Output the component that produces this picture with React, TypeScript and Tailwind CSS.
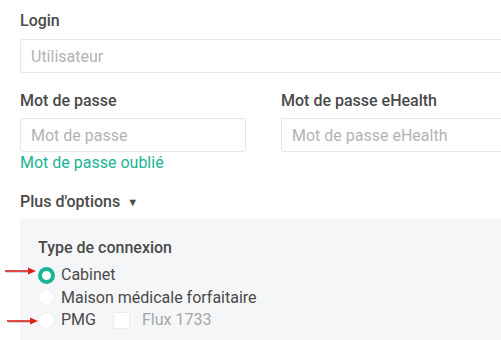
import React from "react";

function Radio({ checked }: { checked?: boolean }) {
  return checked ? (
    <span className="w-[17px] h-[17px] rounded-full border-[4px] border-[#1ab394] bg-white shrink-0" />
  ) : (
    <span className="w-[17px] h-[17px] rounded-full border border-[#ececec] bg-white shrink-0" />
  );
}

function Arrow({ className }: { className: string }) {
  return (
    <svg className={className} width="34" height="10" viewBox="0 0 34 10">
      <line x1="1" y1="5" x2="26" y2="5" stroke="#888" strokeOpacity="0.35" strokeWidth="2" transform="translate(1,1)" />
      <line x1="1" y1="5" x2="26" y2="5" stroke="#e0201c" strokeWidth="1.6" />
      <polygon points="24,1.5 32,5 24,8.5" fill="#e0201c" />
    </svg>
  );
}

export default function App() {
  return (
    <div className="w-[501px] h-[340px] overflow-hidden bg-white relative font-['Roboto',sans-serif] text-[16px]">
      <div className="ml-[20px] w-[487px] pt-[11px]">
        <div className="font-medium text-[#4a4a4a] leading-[20px]">Login</div>
        <input
          className="mt-[8px] w-full h-[34px] border border-[#e6e6e6] rounded-[3px] px-[10px] outline-none placeholder:text-[#b3b3b3]"
          placeholder="Utilisateur"
        />
        <div className="grid grid-cols-2 gap-x-[35px] mt-[18px]">
          <div>
            <div className="font-medium text-[#4a4a4a] leading-[20px]">Mot de passe</div>
            <input
              className="mt-[7px] w-full h-[34px] border border-[#e6e6e6] rounded-[3px] px-[10px] outline-none placeholder:text-[#b3b3b3]"
              placeholder="Mot de passe"
            />
          </div>
          <div>
            <div className="font-medium text-[#4a4a4a] leading-[20px]">Mot de passe eHealth</div>
            <input
              className="mt-[7px] w-full h-[34px] border border-[#e6e6e6] rounded-[3px] px-[10px] outline-none placeholder:text-[#b3b3b3]"
              placeholder="Mot de passe eHealth"
            />
          </div>
        </div>
        <div className="text-[#1ab394] leading-[20px] mt-[1px]">Mot de passe oublié</div>
        <div className="mt-[19px] flex items-center gap-[7px] font-medium text-[#4a4a4a] leading-[20px]">
          <span>Plus d'options</span>
          <span className="text-[11px] leading-none">▼</span>
        </div>
        <div className="mt-[7px] bg-[#f5f6f7] h-[200px] pl-[18px] pt-[19px]">
          <div className="font-medium text-[#4a4a4a] leading-[20px]">Type de connexion</div>
          <div className="mt-[6px] flex flex-col text-[#4a4a4a]">
            <div className="flex items-center gap-[6px] h-[22px]">
              <Radio checked />
              <span>Cabinet</span>
            </div>
            <div className="flex items-center gap-[6px] h-[23px]">
              <Radio />
              <span>Maison médicale forfaitaire</span>
            </div>
            <div className="flex items-center gap-[6px] h-[22px]">
              <Radio />
              <span>PMG</span>
              <span className="ml-[11px] w-[17px] h-[17px] border border-[#ececec] bg-white rounded-[2px]" />
              <span className="ml-[6px] text-[#a6a6a6]">Flux 1733</span>
            </div>
          </div>
        </div>
      </div>
      <Arrow className="absolute left-[4px] top-[266px]" />
      <Arrow className="absolute left-[6px] top-[316px]" />
    </div>
  );
}
